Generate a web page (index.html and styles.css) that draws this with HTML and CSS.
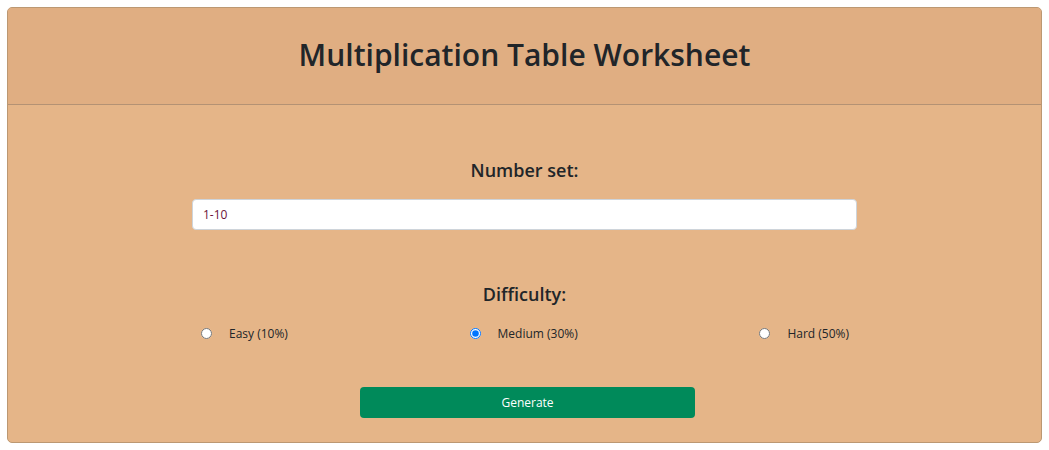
FILE: index.html
```html
<!DOCTYPE html>
<html lang="en">
<head>
<meta charset="utf-8">
<title>Multiplication Table Worksheet</title>
<link rel="stylesheet" href="styles.css">
</head>
<body>
<div class="card">
  <div class="card-header">
    <h1 class="title">Multiplication Table Worksheet</h1>
  </div>
  <div class="card-body">
    <div class="form">
      <label class="section-label" for="numset">Number set:</label>
      <input class="text-input" id="numset" type="text" value="1-10">
      <div class="section-label difficulty">Difficulty:</div>
      <div class="radio-row">
        <label class="radio-item"><input type="radio" name="diff" class="radio"><span>Easy (10%)</span></label>
        <label class="radio-item"><input type="radio" name="diff" class="radio" checked><span>Medium (30%)</span></label>
        <label class="radio-item"><input type="radio" name="diff" class="radio"><span>Hard (50%)</span></label>
      </div>
      <button class="btn" type="button">Generate</button>
    </div>
  </div>
</div>
</body>
</html>
```

FILE: styles.css
```css
* { box-sizing: border-box; }

body {
  margin: 7px;
  font-family: "Open Sans", "Noto Sans", "Liberation Sans", sans-serif;
  color: #212529;
  background: #ffffff;
}

.card {
  border: 1px solid #bc9872;
  border-radius: 5px;
  background: #e5b588;
  overflow: hidden;
}

.card-header {
  background: #e0ae82;
  border-bottom: 1px solid #b49274;
  height: 97px;
  display: flex;
  align-items: center;
  justify-content: center;
}

.title {
  margin: 0;
  font-size: 30px;
  font-weight: 600;
  line-height: 1.2;
  color: #212529;
  padding-bottom: 2px;
}

.card-body {
  padding: 53px 0 24px;
}

.form {
  width: 665px;
  margin: 0 auto;
  display: flex;
  flex-direction: column;
}

.section-label {
  display: block;
  text-align: center;
  font-size: 18px;
  font-weight: 600;
  line-height: 24px;
  margin-bottom: 17px;
}

.text-input {
  display: block;
  width: 100%;
  height: 31px;
  border: 1px solid #ced4da;
  border-radius: 4px;
  background: #fff;
  padding: 0 10px;
  font-family: inherit;
  font-size: 12px;
  color: #6b1238;
  outline: none;
}

.difficulty {
  margin-top: 52px;
}

.radio-row {
  display: flex;
  justify-content: space-between;
  padding: 0 8px 0 9px;
  height: 20px;
  align-items: center;
  font-size: 12px;
}

.radio-item {
  display: flex;
  align-items: center;
  gap: 17px;
}

.radio {
  margin: 0;
  width: 11px;
  height: 11px;
}

.btn {
  margin-top: 44px;
  margin-left: 168px;
  width: 335px;
  height: 31px;
  border: none;
  border-radius: 4px;
  background: #008a5a;
  color: #fff;
  font-family: inherit;
  font-size: 12px;
}
```
